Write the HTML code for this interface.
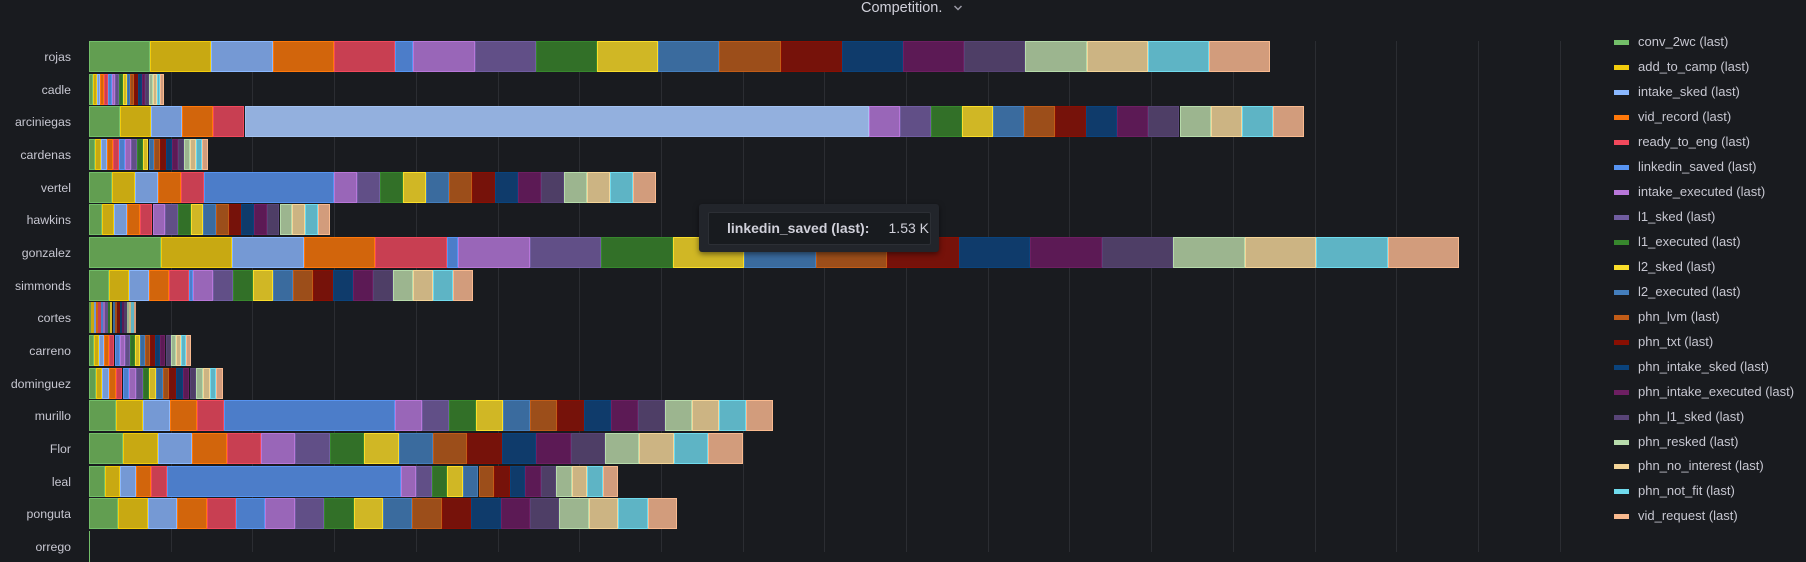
<!DOCTYPE html>
<html><head><meta charset="utf-8"><style>
html,body{margin:0;padding:0;background:#191b1f;width:1806px;height:552px;overflow:hidden;font-family:"Liberation Sans",sans-serif;}
#c{position:absolute;left:0;top:0;width:1806px;height:552px;}
.g{position:absolute;top:41px;bottom:0;width:1px;background:#2b2d32;}
.lbl{position:absolute;right:1735px;width:100px;text-align:right;color:#c7c7d1;font-size:12.3px;line-height:16px;}
.seg{position:absolute;box-sizing:border-box;border:1px solid;}
.lg{position:absolute;left:1614px;height:5px;width:15px;}
.lt{position:absolute;left:1638px;color:#c7c7d1;font-size:13px;line-height:16px;white-space:nowrap;}
</style></head><body><div id="c">
<div style="position:absolute;left:861px;top:-2px;color:#d0d0da;font-size:14.5px;line-height:20px;">Competition.</div>
<svg style="position:absolute;left:953px;top:4px" width="10" height="8"><path d="M1.5 2 L5 5.5 L8.5 2" stroke="#9a9aa5" stroke-width="1.5" fill="none"/></svg>
</div>
<script>
var c=document.getElementById('c');
for(var k=1;k<=18;k++){var d=document.createElement('div');d.className='g';d.style.left=Math.round(89+81.7*k)+'px';c.appendChild(d);}
var fills=['#629e51','#c8a912','#7599d4','#d2650c','#c83f52','#4c7dc9','#9966b8','#614f87','#327028','#d0b725','#3a6b9e','#9c4e1a','#76120a','#0f3b6b','#5c1a55','#4e3e66','#9cb58f','#ccb483','#5eb4c5','#d29c7c'];
var bords=['#73bf69','#f2cc0c','#8ab8ff','#ff780a','#f2495c','#5794f2','#b877d9','#705da0','#37872d','#fade2a','#447ebc','#c15c17','#890f02','#0a437c','#6d1f62','#584477','#b7dbab','#f4d598','#70dbed','#f9ba8f'];
var names=['conv_2wc','add_to_camp','intake_sked','vid_record','ready_to_eng','linkedin_saved','intake_executed','l1_sked','l1_executed','l2_sked','l2_executed','phn_lvm','phn_txt','phn_intake_sked','phn_intake_executed','phn_l1_sked','phn_resked','phn_no_interest','phn_not_fit','vid_request'];
var rows=[['rojas',61.2,18.4],['cadle',3.75,3.75],['arciniegas',31.1,624],['cardenas',5.95,5.95],['vertel',23,130],['hawkins',12.7,0],['gonzalez',71.5,11.5],['simmonds',20,4],['cortes',2.35,2.35],['carreno',5.1,5.1],['dominguez',6.7,6.7],['murillo',27,170.5],['Flor',34.4,0],['leal',15.55,234],['ponguta',29.4,29.4],['orrego',0,0]];
rows.forEach(function(r,i){
 var top=41+32.67*i;
 var l=document.createElement('div');l.className='lbl';l.textContent=r[0];l.style.top=(top+8)+'px';c.appendChild(l);
 var x=89;
 for(var s=0;s<20;s++){var w=(s==5)?r[2]:r[1];if(w<=0)continue;
  var d=document.createElement('div');d.className='seg';
  d.style.left=x+'px';d.style.width=w+'px';d.style.top=top+'px';d.style.height='31px';
  d.style.background=fills[s];d.style.borderColor=bords[s];
  if(r[0]=='arciniegas'&&s==5){d.style.background='#93b0de';d.style.borderColor='#a4c2f0';}
  if(w<3)d.style.borderWidth='0';
  c.appendChild(d);x+=w;}
 if(r[0]=='orrego'){var d=document.createElement('div');d.style.cssText='position:absolute;left:89px;width:1px;top:'+top+'px;height:31px;background:#73bf69';c.appendChild(d);}
});
names.forEach(function(n,i){
 var y=40+24.97*i;
 var s=document.createElement('div');s.className='lg';s.style.top=y+'px';s.style.background=bords[i];c.appendChild(s);
 var t=document.createElement('div');t.className='lt';t.style.top=(y-6)+'px';t.textContent=n+' (last)';c.appendChild(t);
});
var tt=document.createElement('div');
tt.style.cssText='position:absolute;left:699px;top:204px;width:240px;height:48px;background:#22252b;border-radius:3px;box-shadow:0 2px 6px rgba(0,0,0,.5);';
tt.innerHTML='<div style="position:absolute;left:9px;top:8px;width:221px;height:31px;background:#181b1f;border:1px solid #2c2f35;border-radius:2px;"></div><div style="position:absolute;left:28px;top:15px;color:#d0d0da;font-size:14px;font-weight:bold;line-height:18px;white-space:nowrap">linkedin_saved (last):</div><div style="position:absolute;right:10px;top:15px;color:#d0d0da;font-size:14px;line-height:18px;">1.53 K</div>';
c.appendChild(tt);
</script>
</body></html>
